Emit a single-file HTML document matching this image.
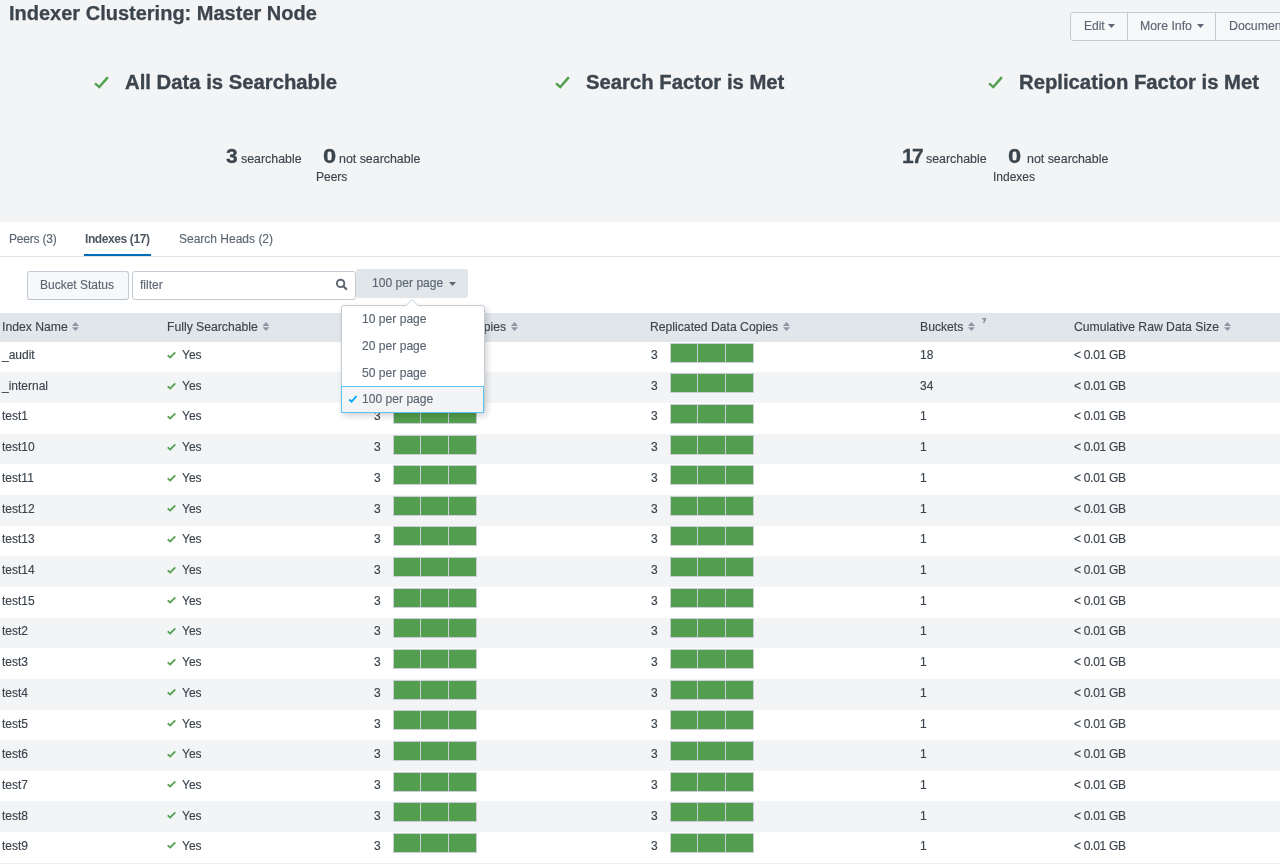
<!DOCTYPE html>
<html><head><meta charset="utf-8"><style>
html,body{margin:0;padding:0;width:1280px;height:864px;overflow:hidden;background:#fff;font-family:"Liberation Sans",sans-serif;}
.ab{position:absolute;white-space:nowrap;}div.ab{will-change:transform;-webkit-text-stroke:0.15px currentColor}
svg.ab{display:block;overflow:visible;pointer-events:none}
.bar{width:82px;height:18px;display:flex;gap:1px;background:#c9ced8;border:1px solid #c9ced8;}
.bar i{display:block;width:27px;height:18px;background:#539e4f;}.bar i:first-child{width:26px}
.dd{background:#fff;border:1px solid #c3cbd4;border-radius:3px;box-shadow:2px 3px 6px rgba(0,0,0,0.18);}
</style></head><body>
<div class="ab" style="left:0;top:0;width:1280px;height:222px;background:#f2f4f5"></div>
<div class="ab" style="left:9.0px;top:1.0px;font-size:20px;line-height:24px;font-weight:bold;color:#3c444d;-webkit-text-stroke:0.25px #3c444d">Indexer Clustering: Master Node</div>
<div class="ab" style="left:1070px;top:12px;width:260px;height:27px;border:1px solid #c3cbd4;border-radius:3px;background:#f7f8fa"></div>
<div class="ab" style="left:1127px;top:13px;width:1px;height:27px;background:#c3cbd4"></div>
<div class="ab" style="left:1215px;top:13px;width:1px;height:27px;background:#c3cbd4"></div>
<div class="ab" style="left:1083.5px;top:18.0px;font-size:12px;line-height:16px;font-weight:normal;color:#5c6773;">Edit</div>
<svg class="ab" style="left:1108px;top:24px" width="7" height="4" viewBox="0 0 7 4"><path d="M0 0H7L3.5 4Z" fill="#5c6773"/></svg>
<div class="ab" style="left:1140.2px;top:18.0px;font-size:12.3px;line-height:16px;font-weight:normal;color:#5c6773;">More Info</div>
<svg class="ab" style="left:1196.5px;top:24px" width="7" height="4" viewBox="0 0 7 4"><path d="M0 0H7L3.5 4Z" fill="#5c6773"/></svg>
<div class="ab" style="left:1228.5px;top:18.0px;font-size:12.3px;line-height:16px;font-weight:normal;color:#5c6773;">Documentation</div>
<svg class="ab" style="left:0;top:0" width="1280" height="222"><path d="M95.0 83.3L99.3 87.1L107.9 77.1" fill="none" stroke="#53a051" stroke-width="2.45" stroke-linejoin="miter" stroke-miterlimit="4"/><path d="M556.0 83.3L560.3 87.1L568.9 77.1" fill="none" stroke="#53a051" stroke-width="2.45" stroke-linejoin="miter" stroke-miterlimit="4"/><path d="M989.0 83.3L993.3 87.1L1001.9 77.1" fill="none" stroke="#53a051" stroke-width="2.45" stroke-linejoin="miter" stroke-miterlimit="4"/></svg>
<div class="ab" style="left:124.5px;top:70.0px;font-size:20.3px;line-height:24px;font-weight:bold;color:#3c444d;-webkit-text-stroke:0.35px #3c444d">All Data is Searchable</div>
<div class="ab" style="left:585.5px;top:70.0px;font-size:20.3px;line-height:24px;font-weight:bold;color:#3c444d;-webkit-text-stroke:0.35px #3c444d">Search Factor is Met</div>
<div class="ab" style="left:1018.7px;top:70.0px;font-size:20.3px;line-height:24px;font-weight:bold;color:#3c444d;-webkit-text-stroke:0.35px #3c444d">Replication Factor is Met</div>
<div class="ab" style="left:225.8px;top:143.0px;font-size:21px;line-height:25px;font-weight:bold;color:#3c444d;-webkit-text-stroke:0.3px #3c444d">3</div>
<div class="ab" style="left:241px;top:151.0px;font-size:12.4px;line-height:16px;font-weight:normal;color:#3c444d;">searchable</div>
<div class="ab" style="left:322.6px;top:143.0px;font-size:21px;line-height:25px;font-weight:bold;color:#3c444d;-webkit-text-stroke:0.3px #3c444d;transform:scaleX(1.13);transform-origin:0 0">0</div>
<div class="ab" style="left:339.2px;top:151.0px;font-size:12.4px;line-height:16px;font-weight:normal;color:#3c444d;">not searchable</div>
<div class="ab" style="left:316.4px;top:169.0px;font-size:12px;line-height:16px;font-weight:normal;color:#3c444d;">Peers</div>
<div class="ab" style="left:902.2px;top:143.0px;font-size:21px;line-height:25px;font-weight:bold;color:#3c444d;-webkit-text-stroke:0.3px #3c444d;letter-spacing:-1.6px">17</div>
<div class="ab" style="left:926.4px;top:151.0px;font-size:12.4px;line-height:16px;font-weight:normal;color:#3c444d;">searchable</div>
<div class="ab" style="left:1008.1px;top:143.0px;font-size:21px;line-height:25px;font-weight:bold;color:#3c444d;-webkit-text-stroke:0.3px #3c444d;transform:scaleX(1.13);transform-origin:0 0">0</div>
<div class="ab" style="left:1027px;top:151.0px;font-size:12.4px;line-height:16px;font-weight:normal;color:#3c444d;">not searchable</div>
<div class="ab" style="left:993px;top:169.0px;font-size:12px;line-height:16px;font-weight:normal;color:#3c444d;">Indexes</div>
<div class="ab" style="left:9px;top:231.0px;font-size:12px;line-height:16px;font-weight:normal;color:#5c6773;letter-spacing:-0.2px">Peers (3)</div>
<div class="ab" style="left:85.2px;top:231.0px;font-size:12px;line-height:16px;font-weight:bold;color:#4e5762;letter-spacing:-0.4px;-webkit-text-stroke:0">Indexes (17)</div>
<div class="ab" style="left:178.6px;top:231.0px;font-size:12px;line-height:16px;font-weight:normal;color:#5c6773;">Search Heads (2)</div>
<div class="ab" style="left:0;top:256px;width:1280px;height:1px;background:#e1e5ea"></div>
<div class="ab" style="left:84px;top:254px;width:67px;height:2px;background:#006eb9"></div>
<div class="ab" style="left:27px;top:271px;width:100px;height:27px;border:1px solid #c3cbd4;border-bottom-color:#b8c1cb;border-radius:3px;background:#f7f8fa"></div>
<div class="ab" style="left:40.4px;top:277.0px;font-size:12px;line-height:16px;font-weight:normal;color:#5c6773;">Bucket Status</div>
<div class="ab" style="left:132px;top:271px;width:222px;height:27px;border:1px solid #c3cbd4;border-radius:3px;background:#fff"></div>
<div class="ab" style="left:140.4px;top:277.0px;font-size:12px;line-height:16px;font-weight:normal;color:#5c6773;">filter</div>
<svg class="ab" style="left:335px;top:278px" width="13" height="12" viewBox="0 0 13 12"><circle cx="5.6" cy="5.4" r="3.7" fill="none" stroke="#5c6773" stroke-width="1.9"/><path d="M8.3 8.1L11.2 11" stroke="#5c6773" stroke-width="2.2" stroke-linecap="round"/></svg>
<div class="ab" style="left:356px;top:269px;width:112px;height:29px;border-radius:3px;background:#e1e6eb"></div>
<div class="ab" style="left:372.4px;top:275.0px;font-size:12.1px;line-height:16px;font-weight:normal;color:#5c6773;">100 per page</div>
<svg class="ab" style="left:448.5px;top:281.5px" width="7" height="4" viewBox="0 0 7 4"><path d="M0 0H7L3.5 4Z" fill="#5c6773"/></svg>
<div class="ab" style="left:0;top:313px;width:1280px;height:29px;background:#e1e6eb"></div>
<div class="ab" style="left:1.8px;top:319.0px;font-size:12.2px;line-height:16px;font-weight:normal;color:#3c444d;">Index Name</div>
<div class="ab" style="left:166.8px;top:319.0px;font-size:12.2px;line-height:16px;font-weight:normal;color:#3c444d;">Fully Searchable</div>
<div class="ab" style="left:373.8px;top:319.0px;font-size:12.2px;line-height:16px;font-weight:normal;color:#3c444d;">Searchable Data Copies</div>
<div class="ab" style="left:650.4px;top:319.0px;font-size:12.2px;line-height:16px;font-weight:normal;color:#3c444d;">Replicated Data Copies</div>
<div class="ab" style="left:919.8px;top:319.0px;font-size:12.2px;line-height:16px;font-weight:normal;color:#3c444d;">Buckets</div>
<div class="ab" style="left:1074.3999999999999px;top:319.0px;font-size:12.2px;line-height:16px;font-weight:normal;color:#3c444d;">Cumulative Raw Data Size</div>
<svg class="ab" style="left:0;top:0" width="1280" height="864"><path d="M72 325.9L75.5 322L79 325.9Z M72 327.2L75.5 331L79 327.2Z" fill="#8b96a3"/><path d="M262.5 325.9L266.0 322L269.5 325.9Z M262.5 327.2L266.0 331L269.5 327.2Z" fill="#8b96a3"/><path d="M511 325.9L514.5 322L518 325.9Z M511 327.2L514.5 331L518 327.2Z" fill="#8b96a3"/><path d="M783 325.9L786.5 322L790 325.9Z M783 327.2L786.5 331L790 327.2Z" fill="#8b96a3"/><path d="M968 325.9L971.5 322L975 325.9Z M968 327.2L971.5 331L975 327.2Z" fill="#8b96a3"/><path d="M1224 325.9L1227.5 322L1231 325.9Z M1224 327.2L1227.5 331L1231 327.2Z" fill="#8b96a3"/></svg>
<div class="ab" style="left:982.4px;top:316.5px;font-size:7px;line-height:8px;font-weight:bold;color:#59626d">?</div>
<div class="ab" style="left:0;top:342px;width:1280px;height:30px;background:#fff"></div>
<div class="ab" style="left:2.0px;top:347.0px;font-size:12px;line-height:16px;font-weight:normal;color:#3c444d;">_audit</div>
<div class="ab" style="left:182.4px;top:347.0px;font-size:12px;line-height:16px;font-weight:normal;color:#3c444d;">Yes</div>
<div class="ab" style="left:373.6px;top:347.0px;font-size:12px;line-height:16px;font-weight:normal;color:#3c444d;">3</div>
<div class="ab bar" style="left:393px;top:343px"><i></i><i></i><i></i></div>
<div class="ab" style="left:650.5px;top:347.0px;font-size:12px;line-height:16px;font-weight:normal;color:#3c444d;">3</div>
<div class="ab bar" style="left:670px;top:343px"><i></i><i></i><i></i></div>
<div class="ab" style="left:919.6px;top:347.0px;font-size:12px;line-height:16px;font-weight:normal;color:#3c444d;">18</div>
<div class="ab" style="left:1074.2px;top:347.0px;font-size:12px;line-height:16px;font-weight:normal;color:#3c444d;letter-spacing:-0.3px">&lt; 0.01 GB</div>
<div class="ab" style="left:0;top:372px;width:1280px;height:31px;background:#f2f4f5"></div>
<div class="ab" style="left:2.0px;top:378.0px;font-size:12px;line-height:16px;font-weight:normal;color:#3c444d;">_internal</div>
<div class="ab" style="left:182.4px;top:378.0px;font-size:12px;line-height:16px;font-weight:normal;color:#3c444d;">Yes</div>
<div class="ab" style="left:373.6px;top:378.0px;font-size:12px;line-height:16px;font-weight:normal;color:#3c444d;">3</div>
<div class="ab bar" style="left:393px;top:373px"><i></i><i></i><i></i></div>
<div class="ab" style="left:650.5px;top:378.0px;font-size:12px;line-height:16px;font-weight:normal;color:#3c444d;">3</div>
<div class="ab bar" style="left:670px;top:373px"><i></i><i></i><i></i></div>
<div class="ab" style="left:919.6px;top:378.0px;font-size:12px;line-height:16px;font-weight:normal;color:#3c444d;">34</div>
<div class="ab" style="left:1074.2px;top:378.0px;font-size:12px;line-height:16px;font-weight:normal;color:#3c444d;letter-spacing:-0.3px">&lt; 0.01 GB</div>
<div class="ab" style="left:0;top:403px;width:1280px;height:31px;background:#fff"></div>
<div class="ab" style="left:2.0px;top:408.0px;font-size:12px;line-height:16px;font-weight:normal;color:#3c444d;">test1</div>
<div class="ab" style="left:182.4px;top:408.0px;font-size:12px;line-height:16px;font-weight:normal;color:#3c444d;">Yes</div>
<div class="ab" style="left:373.6px;top:408.0px;font-size:12px;line-height:16px;font-weight:normal;color:#3c444d;">3</div>
<div class="ab bar" style="left:393px;top:404px"><i></i><i></i><i></i></div>
<div class="ab" style="left:650.5px;top:408.0px;font-size:12px;line-height:16px;font-weight:normal;color:#3c444d;">3</div>
<div class="ab bar" style="left:670px;top:404px"><i></i><i></i><i></i></div>
<div class="ab" style="left:919.6px;top:408.0px;font-size:12px;line-height:16px;font-weight:normal;color:#3c444d;">1</div>
<div class="ab" style="left:1074.2px;top:408.0px;font-size:12px;line-height:16px;font-weight:normal;color:#3c444d;letter-spacing:-0.3px">&lt; 0.01 GB</div>
<div class="ab" style="left:0;top:434px;width:1280px;height:30px;background:#f2f4f5"></div>
<div class="ab" style="left:2.0px;top:439.0px;font-size:12px;line-height:16px;font-weight:normal;color:#3c444d;">test10</div>
<div class="ab" style="left:182.4px;top:439.0px;font-size:12px;line-height:16px;font-weight:normal;color:#3c444d;">Yes</div>
<div class="ab" style="left:373.6px;top:439.0px;font-size:12px;line-height:16px;font-weight:normal;color:#3c444d;">3</div>
<div class="ab bar" style="left:393px;top:435px"><i></i><i></i><i></i></div>
<div class="ab" style="left:650.5px;top:439.0px;font-size:12px;line-height:16px;font-weight:normal;color:#3c444d;">3</div>
<div class="ab bar" style="left:670px;top:435px"><i></i><i></i><i></i></div>
<div class="ab" style="left:919.6px;top:439.0px;font-size:12px;line-height:16px;font-weight:normal;color:#3c444d;">1</div>
<div class="ab" style="left:1074.2px;top:439.0px;font-size:12px;line-height:16px;font-weight:normal;color:#3c444d;letter-spacing:-0.3px">&lt; 0.01 GB</div>
<div class="ab" style="left:0;top:464px;width:1280px;height:31px;background:#fff"></div>
<div class="ab" style="left:2.0px;top:470.0px;font-size:12px;line-height:16px;font-weight:normal;color:#3c444d;">test11</div>
<div class="ab" style="left:182.4px;top:470.0px;font-size:12px;line-height:16px;font-weight:normal;color:#3c444d;">Yes</div>
<div class="ab" style="left:373.6px;top:470.0px;font-size:12px;line-height:16px;font-weight:normal;color:#3c444d;">3</div>
<div class="ab bar" style="left:393px;top:465px"><i></i><i></i><i></i></div>
<div class="ab" style="left:650.5px;top:470.0px;font-size:12px;line-height:16px;font-weight:normal;color:#3c444d;">3</div>
<div class="ab bar" style="left:670px;top:465px"><i></i><i></i><i></i></div>
<div class="ab" style="left:919.6px;top:470.0px;font-size:12px;line-height:16px;font-weight:normal;color:#3c444d;">1</div>
<div class="ab" style="left:1074.2px;top:470.0px;font-size:12px;line-height:16px;font-weight:normal;color:#3c444d;letter-spacing:-0.3px">&lt; 0.01 GB</div>
<div class="ab" style="left:0;top:495px;width:1280px;height:31px;background:#f2f4f5"></div>
<div class="ab" style="left:2.0px;top:501.0px;font-size:12px;line-height:16px;font-weight:normal;color:#3c444d;">test12</div>
<div class="ab" style="left:182.4px;top:501.0px;font-size:12px;line-height:16px;font-weight:normal;color:#3c444d;">Yes</div>
<div class="ab" style="left:373.6px;top:501.0px;font-size:12px;line-height:16px;font-weight:normal;color:#3c444d;">3</div>
<div class="ab bar" style="left:393px;top:496px"><i></i><i></i><i></i></div>
<div class="ab" style="left:650.5px;top:501.0px;font-size:12px;line-height:16px;font-weight:normal;color:#3c444d;">3</div>
<div class="ab bar" style="left:670px;top:496px"><i></i><i></i><i></i></div>
<div class="ab" style="left:919.6px;top:501.0px;font-size:12px;line-height:16px;font-weight:normal;color:#3c444d;">1</div>
<div class="ab" style="left:1074.2px;top:501.0px;font-size:12px;line-height:16px;font-weight:normal;color:#3c444d;letter-spacing:-0.3px">&lt; 0.01 GB</div>
<div class="ab" style="left:0;top:526px;width:1280px;height:30px;background:#fff"></div>
<div class="ab" style="left:2.0px;top:531.0px;font-size:12px;line-height:16px;font-weight:normal;color:#3c444d;">test13</div>
<div class="ab" style="left:182.4px;top:531.0px;font-size:12px;line-height:16px;font-weight:normal;color:#3c444d;">Yes</div>
<div class="ab" style="left:373.6px;top:531.0px;font-size:12px;line-height:16px;font-weight:normal;color:#3c444d;">3</div>
<div class="ab bar" style="left:393px;top:526px"><i></i><i></i><i></i></div>
<div class="ab" style="left:650.5px;top:531.0px;font-size:12px;line-height:16px;font-weight:normal;color:#3c444d;">3</div>
<div class="ab bar" style="left:670px;top:526px"><i></i><i></i><i></i></div>
<div class="ab" style="left:919.6px;top:531.0px;font-size:12px;line-height:16px;font-weight:normal;color:#3c444d;">1</div>
<div class="ab" style="left:1074.2px;top:531.0px;font-size:12px;line-height:16px;font-weight:normal;color:#3c444d;letter-spacing:-0.3px">&lt; 0.01 GB</div>
<div class="ab" style="left:0;top:556px;width:1280px;height:31px;background:#f2f4f5"></div>
<div class="ab" style="left:2.0px;top:562.0px;font-size:12px;line-height:16px;font-weight:normal;color:#3c444d;">test14</div>
<div class="ab" style="left:182.4px;top:562.0px;font-size:12px;line-height:16px;font-weight:normal;color:#3c444d;">Yes</div>
<div class="ab" style="left:373.6px;top:562.0px;font-size:12px;line-height:16px;font-weight:normal;color:#3c444d;">3</div>
<div class="ab bar" style="left:393px;top:557px"><i></i><i></i><i></i></div>
<div class="ab" style="left:650.5px;top:562.0px;font-size:12px;line-height:16px;font-weight:normal;color:#3c444d;">3</div>
<div class="ab bar" style="left:670px;top:557px"><i></i><i></i><i></i></div>
<div class="ab" style="left:919.6px;top:562.0px;font-size:12px;line-height:16px;font-weight:normal;color:#3c444d;">1</div>
<div class="ab" style="left:1074.2px;top:562.0px;font-size:12px;line-height:16px;font-weight:normal;color:#3c444d;letter-spacing:-0.3px">&lt; 0.01 GB</div>
<div class="ab" style="left:0;top:587px;width:1280px;height:31px;background:#fff"></div>
<div class="ab" style="left:2.0px;top:593.0px;font-size:12px;line-height:16px;font-weight:normal;color:#3c444d;">test15</div>
<div class="ab" style="left:182.4px;top:593.0px;font-size:12px;line-height:16px;font-weight:normal;color:#3c444d;">Yes</div>
<div class="ab" style="left:373.6px;top:593.0px;font-size:12px;line-height:16px;font-weight:normal;color:#3c444d;">3</div>
<div class="ab bar" style="left:393px;top:588px"><i></i><i></i><i></i></div>
<div class="ab" style="left:650.5px;top:593.0px;font-size:12px;line-height:16px;font-weight:normal;color:#3c444d;">3</div>
<div class="ab bar" style="left:670px;top:588px"><i></i><i></i><i></i></div>
<div class="ab" style="left:919.6px;top:593.0px;font-size:12px;line-height:16px;font-weight:normal;color:#3c444d;">1</div>
<div class="ab" style="left:1074.2px;top:593.0px;font-size:12px;line-height:16px;font-weight:normal;color:#3c444d;letter-spacing:-0.3px">&lt; 0.01 GB</div>
<div class="ab" style="left:0;top:618px;width:1280px;height:30px;background:#f2f4f5"></div>
<div class="ab" style="left:2.0px;top:623.0px;font-size:12px;line-height:16px;font-weight:normal;color:#3c444d;">test2</div>
<div class="ab" style="left:182.4px;top:623.0px;font-size:12px;line-height:16px;font-weight:normal;color:#3c444d;">Yes</div>
<div class="ab" style="left:373.6px;top:623.0px;font-size:12px;line-height:16px;font-weight:normal;color:#3c444d;">3</div>
<div class="ab bar" style="left:393px;top:618px"><i></i><i></i><i></i></div>
<div class="ab" style="left:650.5px;top:623.0px;font-size:12px;line-height:16px;font-weight:normal;color:#3c444d;">3</div>
<div class="ab bar" style="left:670px;top:618px"><i></i><i></i><i></i></div>
<div class="ab" style="left:919.6px;top:623.0px;font-size:12px;line-height:16px;font-weight:normal;color:#3c444d;">1</div>
<div class="ab" style="left:1074.2px;top:623.0px;font-size:12px;line-height:16px;font-weight:normal;color:#3c444d;letter-spacing:-0.3px">&lt; 0.01 GB</div>
<div class="ab" style="left:0;top:648px;width:1280px;height:31px;background:#fff"></div>
<div class="ab" style="left:2.0px;top:654.0px;font-size:12px;line-height:16px;font-weight:normal;color:#3c444d;">test3</div>
<div class="ab" style="left:182.4px;top:654.0px;font-size:12px;line-height:16px;font-weight:normal;color:#3c444d;">Yes</div>
<div class="ab" style="left:373.6px;top:654.0px;font-size:12px;line-height:16px;font-weight:normal;color:#3c444d;">3</div>
<div class="ab bar" style="left:393px;top:649px"><i></i><i></i><i></i></div>
<div class="ab" style="left:650.5px;top:654.0px;font-size:12px;line-height:16px;font-weight:normal;color:#3c444d;">3</div>
<div class="ab bar" style="left:670px;top:649px"><i></i><i></i><i></i></div>
<div class="ab" style="left:919.6px;top:654.0px;font-size:12px;line-height:16px;font-weight:normal;color:#3c444d;">1</div>
<div class="ab" style="left:1074.2px;top:654.0px;font-size:12px;line-height:16px;font-weight:normal;color:#3c444d;letter-spacing:-0.3px">&lt; 0.01 GB</div>
<div class="ab" style="left:0;top:679px;width:1280px;height:31px;background:#f2f4f5"></div>
<div class="ab" style="left:2.0px;top:685.0px;font-size:12px;line-height:16px;font-weight:normal;color:#3c444d;">test4</div>
<div class="ab" style="left:182.4px;top:685.0px;font-size:12px;line-height:16px;font-weight:normal;color:#3c444d;">Yes</div>
<div class="ab" style="left:373.6px;top:685.0px;font-size:12px;line-height:16px;font-weight:normal;color:#3c444d;">3</div>
<div class="ab bar" style="left:393px;top:680px"><i></i><i></i><i></i></div>
<div class="ab" style="left:650.5px;top:685.0px;font-size:12px;line-height:16px;font-weight:normal;color:#3c444d;">3</div>
<div class="ab bar" style="left:670px;top:680px"><i></i><i></i><i></i></div>
<div class="ab" style="left:919.6px;top:685.0px;font-size:12px;line-height:16px;font-weight:normal;color:#3c444d;">1</div>
<div class="ab" style="left:1074.2px;top:685.0px;font-size:12px;line-height:16px;font-weight:normal;color:#3c444d;letter-spacing:-0.3px">&lt; 0.01 GB</div>
<div class="ab" style="left:0;top:710px;width:1280px;height:30px;background:#fff"></div>
<div class="ab" style="left:2.0px;top:716.0px;font-size:12px;line-height:16px;font-weight:normal;color:#3c444d;">test5</div>
<div class="ab" style="left:182.4px;top:716.0px;font-size:12px;line-height:16px;font-weight:normal;color:#3c444d;">Yes</div>
<div class="ab" style="left:373.6px;top:716.0px;font-size:12px;line-height:16px;font-weight:normal;color:#3c444d;">3</div>
<div class="ab bar" style="left:393px;top:710px"><i></i><i></i><i></i></div>
<div class="ab" style="left:650.5px;top:716.0px;font-size:12px;line-height:16px;font-weight:normal;color:#3c444d;">3</div>
<div class="ab bar" style="left:670px;top:710px"><i></i><i></i><i></i></div>
<div class="ab" style="left:919.6px;top:716.0px;font-size:12px;line-height:16px;font-weight:normal;color:#3c444d;">1</div>
<div class="ab" style="left:1074.2px;top:716.0px;font-size:12px;line-height:16px;font-weight:normal;color:#3c444d;letter-spacing:-0.3px">&lt; 0.01 GB</div>
<div class="ab" style="left:0;top:740px;width:1280px;height:31px;background:#f2f4f5"></div>
<div class="ab" style="left:2.0px;top:746.0px;font-size:12px;line-height:16px;font-weight:normal;color:#3c444d;">test6</div>
<div class="ab" style="left:182.4px;top:746.0px;font-size:12px;line-height:16px;font-weight:normal;color:#3c444d;">Yes</div>
<div class="ab" style="left:373.6px;top:746.0px;font-size:12px;line-height:16px;font-weight:normal;color:#3c444d;">3</div>
<div class="ab bar" style="left:393px;top:741px"><i></i><i></i><i></i></div>
<div class="ab" style="left:650.5px;top:746.0px;font-size:12px;line-height:16px;font-weight:normal;color:#3c444d;">3</div>
<div class="ab bar" style="left:670px;top:741px"><i></i><i></i><i></i></div>
<div class="ab" style="left:919.6px;top:746.0px;font-size:12px;line-height:16px;font-weight:normal;color:#3c444d;">1</div>
<div class="ab" style="left:1074.2px;top:746.0px;font-size:12px;line-height:16px;font-weight:normal;color:#3c444d;letter-spacing:-0.3px">&lt; 0.01 GB</div>
<div class="ab" style="left:0;top:771px;width:1280px;height:30px;background:#fff"></div>
<div class="ab" style="left:2.0px;top:777.0px;font-size:12px;line-height:16px;font-weight:normal;color:#3c444d;">test7</div>
<div class="ab" style="left:182.4px;top:777.0px;font-size:12px;line-height:16px;font-weight:normal;color:#3c444d;">Yes</div>
<div class="ab" style="left:373.6px;top:777.0px;font-size:12px;line-height:16px;font-weight:normal;color:#3c444d;">3</div>
<div class="ab bar" style="left:393px;top:772px"><i></i><i></i><i></i></div>
<div class="ab" style="left:650.5px;top:777.0px;font-size:12px;line-height:16px;font-weight:normal;color:#3c444d;">3</div>
<div class="ab bar" style="left:670px;top:772px"><i></i><i></i><i></i></div>
<div class="ab" style="left:919.6px;top:777.0px;font-size:12px;line-height:16px;font-weight:normal;color:#3c444d;">1</div>
<div class="ab" style="left:1074.2px;top:777.0px;font-size:12px;line-height:16px;font-weight:normal;color:#3c444d;letter-spacing:-0.3px">&lt; 0.01 GB</div>
<div class="ab" style="left:0;top:801px;width:1280px;height:31px;background:#f2f4f5"></div>
<div class="ab" style="left:2.0px;top:808.0px;font-size:12px;line-height:16px;font-weight:normal;color:#3c444d;">test8</div>
<div class="ab" style="left:182.4px;top:808.0px;font-size:12px;line-height:16px;font-weight:normal;color:#3c444d;">Yes</div>
<div class="ab" style="left:373.6px;top:808.0px;font-size:12px;line-height:16px;font-weight:normal;color:#3c444d;">3</div>
<div class="ab bar" style="left:393px;top:802px"><i></i><i></i><i></i></div>
<div class="ab" style="left:650.5px;top:808.0px;font-size:12px;line-height:16px;font-weight:normal;color:#3c444d;">3</div>
<div class="ab bar" style="left:670px;top:802px"><i></i><i></i><i></i></div>
<div class="ab" style="left:919.6px;top:808.0px;font-size:12px;line-height:16px;font-weight:normal;color:#3c444d;">1</div>
<div class="ab" style="left:1074.2px;top:808.0px;font-size:12px;line-height:16px;font-weight:normal;color:#3c444d;letter-spacing:-0.3px">&lt; 0.01 GB</div>
<div class="ab" style="left:0;top:832px;width:1280px;height:31px;background:#fff"></div>
<div class="ab" style="left:2.0px;top:838.0px;font-size:12px;line-height:16px;font-weight:normal;color:#3c444d;">test9</div>
<div class="ab" style="left:182.4px;top:838.0px;font-size:12px;line-height:16px;font-weight:normal;color:#3c444d;">Yes</div>
<div class="ab" style="left:373.6px;top:838.0px;font-size:12px;line-height:16px;font-weight:normal;color:#3c444d;">3</div>
<div class="ab bar" style="left:393px;top:833px"><i></i><i></i><i></i></div>
<div class="ab" style="left:650.5px;top:838.0px;font-size:12px;line-height:16px;font-weight:normal;color:#3c444d;">3</div>
<div class="ab bar" style="left:670px;top:833px"><i></i><i></i><i></i></div>
<div class="ab" style="left:919.6px;top:838.0px;font-size:12px;line-height:16px;font-weight:normal;color:#3c444d;">1</div>
<div class="ab" style="left:1074.2px;top:838.0px;font-size:12px;line-height:16px;font-weight:normal;color:#3c444d;letter-spacing:-0.3px">&lt; 0.01 GB</div>
<svg class="ab" style="left:0;top:0" width="1280" height="864"><path d="M167.7 355.4L170.2 357.5L175.3 352.4" fill="none" stroke="#53a051" stroke-width="1.8" stroke-linejoin="miter" stroke-miterlimit="4"/><path d="M167.7 386.4L170.2 388.5L175.3 383.4" fill="none" stroke="#53a051" stroke-width="1.8" stroke-linejoin="miter" stroke-miterlimit="4"/><path d="M167.7 416.4L170.2 418.5L175.3 413.4" fill="none" stroke="#53a051" stroke-width="1.8" stroke-linejoin="miter" stroke-miterlimit="4"/><path d="M167.7 447.4L170.2 449.5L175.3 444.4" fill="none" stroke="#53a051" stroke-width="1.8" stroke-linejoin="miter" stroke-miterlimit="4"/><path d="M167.7 478.4L170.2 480.5L175.3 475.4" fill="none" stroke="#53a051" stroke-width="1.8" stroke-linejoin="miter" stroke-miterlimit="4"/><path d="M167.7 508.4L170.2 510.5L175.3 505.4" fill="none" stroke="#53a051" stroke-width="1.8" stroke-linejoin="miter" stroke-miterlimit="4"/><path d="M167.7 539.4L170.2 541.5L175.3 536.4" fill="none" stroke="#53a051" stroke-width="1.8" stroke-linejoin="miter" stroke-miterlimit="4"/><path d="M167.7 570.4L170.2 572.5L175.3 567.4" fill="none" stroke="#53a051" stroke-width="1.8" stroke-linejoin="miter" stroke-miterlimit="4"/><path d="M167.7 600.4L170.2 602.5L175.3 597.4" fill="none" stroke="#53a051" stroke-width="1.8" stroke-linejoin="miter" stroke-miterlimit="4"/><path d="M167.7 631.4L170.2 633.5L175.3 628.4" fill="none" stroke="#53a051" stroke-width="1.8" stroke-linejoin="miter" stroke-miterlimit="4"/><path d="M167.7 662.4L170.2 664.5L175.3 659.4" fill="none" stroke="#53a051" stroke-width="1.8" stroke-linejoin="miter" stroke-miterlimit="4"/><path d="M167.7 692.4L170.2 694.5L175.3 689.4" fill="none" stroke="#53a051" stroke-width="1.8" stroke-linejoin="miter" stroke-miterlimit="4"/><path d="M167.7 723.4L170.2 725.5L175.3 720.4" fill="none" stroke="#53a051" stroke-width="1.8" stroke-linejoin="miter" stroke-miterlimit="4"/><path d="M167.7 754.4L170.2 756.5L175.3 751.4" fill="none" stroke="#53a051" stroke-width="1.8" stroke-linejoin="miter" stroke-miterlimit="4"/><path d="M167.7 784.4L170.2 786.5L175.3 781.4" fill="none" stroke="#53a051" stroke-width="1.8" stroke-linejoin="miter" stroke-miterlimit="4"/><path d="M167.7 815.4L170.2 817.5L175.3 812.4" fill="none" stroke="#53a051" stroke-width="1.8" stroke-linejoin="miter" stroke-miterlimit="4"/><path d="M167.7 845.4L170.2 847.5L175.3 842.4" fill="none" stroke="#53a051" stroke-width="1.8" stroke-linejoin="miter" stroke-miterlimit="4"/></svg>
<div class="ab" style="left:0;top:863px;width:1280px;height:1px;background:#eceef1"></div>
<div class="ab dd" style="left:341px;top:305px;width:142px;height:106px"></div>
<svg class="ab" style="left:405px;top:299px" width="14" height="8" viewBox="0 0 14 8"><path d="M0 7.5L7 0.5L14 7.5" fill="#fff" stroke="#c3cbd4" stroke-width="1"/><rect x="0" y="7" width="14" height="2" fill="#fff"/></svg>
<div class="ab" style="left:362.2px;top:310.5px;font-size:12.1px;line-height:16px;font-weight:normal;color:#5c6773;">10 per page</div>
<div class="ab" style="left:362.2px;top:338.0px;font-size:12.1px;line-height:16px;font-weight:normal;color:#5c6773;">20 per page</div>
<div class="ab" style="left:362.2px;top:365.0px;font-size:12.1px;line-height:16px;font-weight:normal;color:#5c6773;">50 per page</div>
<div class="ab" style="left:341px;top:386px;width:141px;height:25px;border:1px solid #5ec4fc;background:#f2f4f5"></div>
<svg class="ab" style="left:0;top:0" width="1280" height="864"><path d="M349.3 399.5L351.6 401.7L356.6 396.0" fill="none" stroke="#00a4fd" stroke-width="1.8" stroke-linejoin="miter" stroke-miterlimit="4"/></svg>
<div class="ab" style="left:362.2px;top:391.0px;font-size:12.1px;line-height:16px;font-weight:normal;color:#5c6773;">100 per page</div>
</body></html>
